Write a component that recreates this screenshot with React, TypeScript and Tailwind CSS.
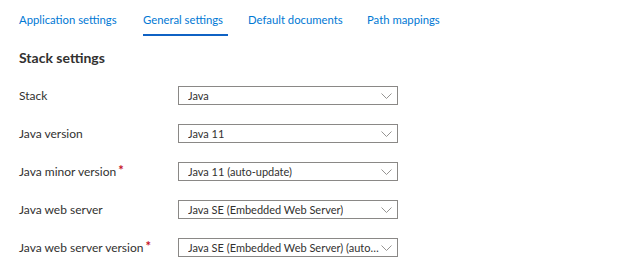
import React from "react";

const tabs = [
  { label: "Application settings", w: "w-[124px]" },
  { label: "General settings", w: "w-[105px]", active: true },
  { label: "Default documents", w: "w-[119px]" },
  { label: "Path mappings", w: "w-[100px]" },
];

const rows = [
  { label: "Stack", value: "Java" },
  { label: "Java version", value: "Java 11" },
  { label: "Java minor version", value: "Java 11 (auto-update)", required: true },
  { label: "Java web server", value: "Java SE (Embedded Web Server)" },
  {
    label: "Java web server version",
    value: "Java SE (Embedded Web Server) (auto-update)",
    required: true,
  },
];

const Chevron = () => (
  <svg width="11" height="6" viewBox="0 0 11 6" className="shrink-0">
    <path d="M0.5 0.5 L5.5 5.5 L10.5 0.5" fill="none" stroke="#8a8886" strokeWidth="0.9" />
  </svg>
);

const App: React.FC = () => {
  return (
    <div className="h-[275px] w-[628px] bg-white pl-[19px] font-['Lato',sans-serif] text-[12px] text-[#323130]">
      <div className="flex pt-[11px]">
        {tabs.map((t) => (
          <div key={t.label} className={`${t.w} shrink-0`}>
            <div className="inline-flex flex-col">
              <span className="text-[11.3px] leading-[17px] text-[#0078d4]">{t.label}</span>
              <span
                className={`mt-[6px] h-[2px] w-[85px] ${t.active ? "bg-[#0f62c4]" : "bg-transparent"}`}
              />
            </div>
          </div>
        ))}
      </div>
      <h2 className="mt-[13px] text-[14px] font-bold leading-[18px] text-[#323130]">Stack settings</h2>
      <div className="mt-[19px] flex flex-col gap-[19px]">
        {rows.map((r) => (
          <div key={r.label} className="flex items-center">
            <div className="flex w-[159px] shrink-0 items-start">
              <span className="leading-[16px]">{r.label}</span>
              {r.required && (
                <span className="ml-[2px] -mt-[2px] text-[13px] font-bold leading-[16px] text-[#c50f1f]">*</span>
              )}
            </div>
            <div className="flex h-[19px] w-[220px] items-center justify-between border border-[#8a8886] pl-[9px] pr-[5px]">
              <span className="truncate text-[11px] leading-[16px]">{r.value}</span>
              <Chevron />
            </div>
          </div>
        ))}
      </div>
    </div>
  );
};

export default App;
